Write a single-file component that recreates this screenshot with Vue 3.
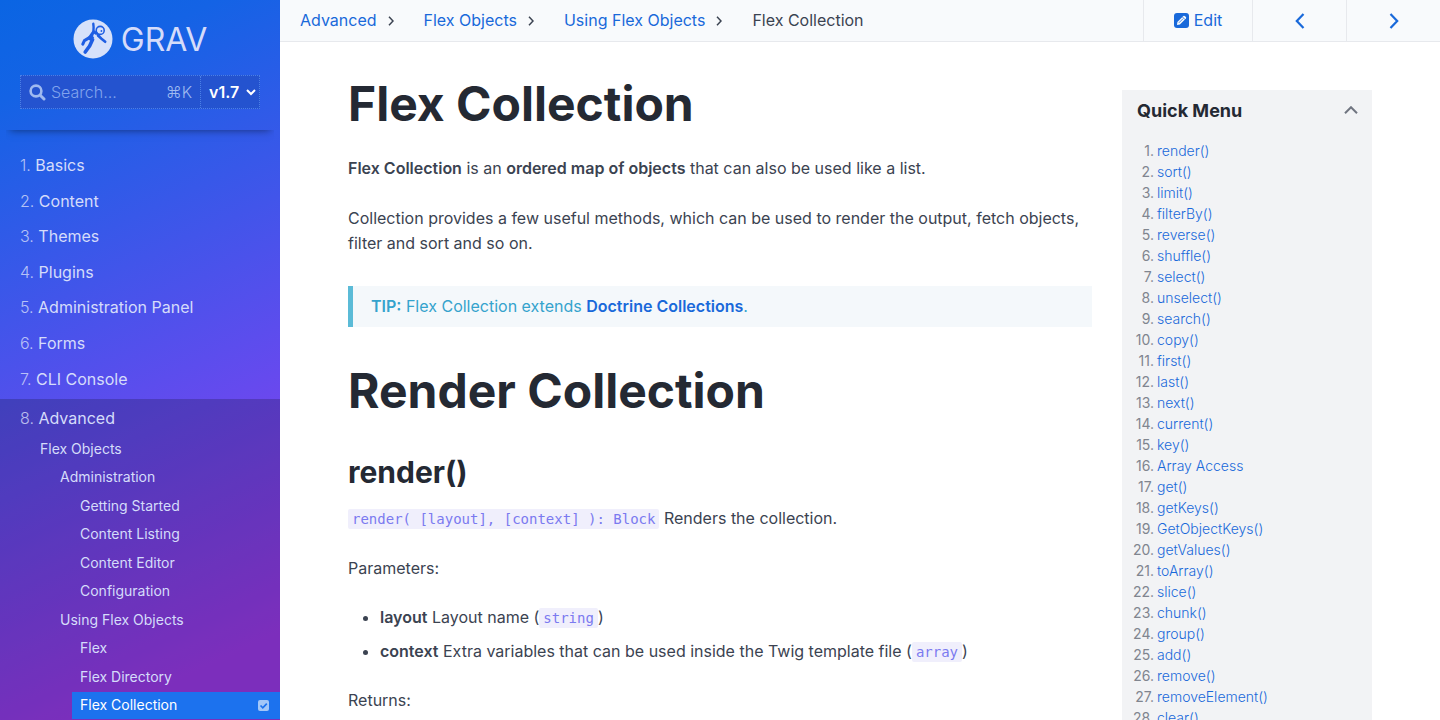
<script setup>
import { ref } from "vue";

const search = ref("");
const version = ref("v1.7");
const menuOpen = ref(true);

const chapters = [
  "Basics",
  "Content",
  "Themes",
  "Plugins",
  "Administration Panel",
  "Forms",
  "CLI Console",
];

// level = indentation in the tree
const pages = [
  { title: "Flex Objects", level: 1 },
  { title: "Administration", level: 2 },
  { title: "Getting Started", level: 3 },
  { title: "Content Listing", level: 3 },
  { title: "Content Editor", level: 3 },
  { title: "Configuration", level: 3 },
  { title: "Using Flex Objects", level: 2 },
  { title: "Flex", level: 3 },
  { title: "Flex Directory", level: 3 },
  { title: "Flex Collection", level: 3, active: true },
];

const crumbs = ["Advanced", "Flex Objects", "Using Flex Objects"];

const methods = [
  "render()", "sort()", "limit()", "filterBy()", "reverse()", "shuffle()",
  "select()", "unselect()", "search()", "copy()", "first()", "last()",
  "next()", "current()", "key()", "Array Access", "get()", "getKeys()",
  "GetObjectKeys()", "getValues()", "toArray()", "slice()", "chunk()",
  "group()", "add()", "remove()", "removeElement()", "clear()",
];
</script>

<template>
  <div class="page">
    <aside class="sidebar">
      <header class="side-head">
        <a class="logo" href="#">
          <svg width="40" height="40" viewBox="0 0 40 40" aria-hidden="true">
            <circle cx="20" cy="20" r="19.5" fill="#d6e1fa" />
            <g fill="none" stroke="#1f5ee3" stroke-linecap="round" stroke-linejoin="round">
              <path d="M20.3 4.8 L20.6 8 L20.4 13" stroke-width="2.4" />
              <path d="M21 14 L17.5 19" stroke-width="5" />
              <path d="M25 16.5 L28.5 19.8 L32.2 22.8" stroke-width="2.6" />
              <path d="M16.4 18.6 L11.4 21.6 L9.8 25.2" stroke-width="3" />
              <path d="M19.6 20.6 L16.6 27 L12.2 33" stroke-width="3.6" />
              <circle cx="27.2" cy="11.4" r="4" stroke-width="1.6" />
              <path d="M23.2 13.4 L25.6 16.4" stroke-width="2.4" />
            </g>
            <path d="M21 14.8 L23.4 16.2 L22.2 18.6 L20 17.4 Z" fill="#d6e1fa" />
            <circle cx="28.4" cy="12" r="0.9" fill="#1f5ee3" />
          </svg>
          <span>GRAV</span>
        </a>
        <form class="search" @submit.prevent>
          <label class="search-field" for="search">
            <svg width="17" height="17" viewBox="0 0 17 17" fill="none" stroke="currentColor" stroke-linecap="round" aria-hidden="true">
              <circle cx="7" cy="7" r="5.4" stroke-width="2.6" />
              <path d="M11.2 11.2 L15 15" stroke-width="3" />
            </svg>
            <input id="search" v-model="search" type="text" placeholder="Search..." />
            <kbd>⌘K</kbd>
          </label>
          <span class="version">
            <select v-model="version" aria-label="Version">
              <option>v1.7</option>
              <option>v1.6</option>
            </select>
            <svg width="10" height="7" viewBox="0 0 10 7" fill="none" stroke="currentColor" stroke-width="2" aria-hidden="true">
              <path d="M1 1 L5 5 L9 1" />
            </svg>
          </span>
        </form>
      </header>

      <ul class="chapters">
        <li v-for="(chapter, i) in chapters" :key="chapter">
          <a href="#"><b>{{ i + 1 }}.</b> {{ chapter }}</a>
        </li>
      </ul>
      <div class="current">
        <a class="current-title" href="#"><b>8.</b> Advanced</a>
        <ul class="tree">
          <li v-for="page in pages" :key="page.title" :class="['level-' + page.level, { active: page.active }]">
            <a href="#">{{ page.title }}</a>
            <svg v-if="page.active" width="11" height="11" viewBox="0 0 11 11" aria-hidden="true">
              <rect width="11" height="11" rx="2" fill="#a3c7f8" />
              <path d="M2.5 5.5 L4.8 7.8 L8.8 3.6" fill="none" stroke="#1c72ee" stroke-width="1.7" />
            </svg>
          </li>
        </ul>
      </div>
    </aside>

    <div class="body">
      <nav class="topbar">
        <ol class="crumbs">
          <li v-for="crumb in crumbs" :key="crumb">
            <a href="#">{{ crumb }}</a>
            <svg width="6" height="10" viewBox="0 0 6 10" fill="none" stroke="currentColor" stroke-width="1.5" aria-hidden="true">
              <path d="M1 0.8 L5 5 L1 9.2" />
            </svg>
          </li>
          <li>Flex Collection</li>
        </ol>
        <a class="tool edit" href="#">
          <svg width="15" height="15" viewBox="0 0 15 15" aria-hidden="true">
            <rect width="15" height="15" rx="3" fill="#1969da" />
            <path d="M3 12 L3.4 9 L9.4 3 Q10.2 2.4 11 3.2 L11.9 4.1 Q12.5 4.8 11.9 5.5 L5.9 11.6 Z" fill="#f8fafc" />
            <path d="M4.9 9.8 L9.1 5.6 M8.5 4 L11 6.5" stroke="#1969da" stroke-width="0.8" />
          </svg>
          Edit
        </a>
        <a class="tool" href="#" aria-label="Previous">
          <svg width="10" height="16" viewBox="0 0 10 16" fill="none" stroke="currentColor" stroke-width="2.2">
            <path d="M8.5 1 L1.8 8 L8.5 15" />
          </svg>
        </a>
        <a class="tool" href="#" aria-label="Next">
          <svg width="10" height="16" viewBox="0 0 10 16" fill="none" stroke="currentColor" stroke-width="2.2">
            <path d="M1.5 1 L8.2 8 L1.5 15" />
          </svg>
        </a>
      </nav>

      <div class="columns">
        <main class="article">
          <h1>Flex Collection</h1>
          <p><strong>Flex Collection</strong> is an <strong>ordered map of objects</strong> that can also be used like a list.</p>
          <p>Collection provides a few useful methods, which can be used to render the output, fetch objects, filter and sort and so on.</p>
          <div class="tip"><strong>TIP:</strong> Flex Collection extends <a href="#">Doctrine Collections</a>.</div>
          <h1>Render Collection</h1>
          <h2>render()</h2>
          <p><code>render( [layout], [context] ): Block</code> Renders the collection.</p>
          <p>Parameters:</p>
          <ul>
            <li><strong>layout</strong> Layout name (<code>string</code>)</li>
            <li><strong>context</strong> Extra variables that can be used inside the Twig template file (<code>array</code>)</li>
          </ul>
          <p>Returns:</p>
        </main>

        <aside class="quick">
          <button type="button" :aria-expanded="menuOpen" @click="menuOpen = !menuOpen">
            Quick Menu
            <svg width="14" height="8" viewBox="0 0 14 8" fill="none" stroke="#707580" stroke-width="2" aria-hidden="true">
              <path d="M1 7.2 L7 1.2 L13 7.2" />
            </svg>
          </button>
          <ol v-show="menuOpen">
            <li v-for="(method, i) in methods" :key="method">
              <span>{{ i + 1 }}.</span>
              <a href="#">{{ method }}</a>
            </li>
          </ol>
        </aside>
      </div>
    </div>
  </div>
</template>

<style>
body {
  margin: 0;
}
</style>

<style scoped>
.page {
  display: flex;
  height: 100vh;
  overflow: hidden;
  font-family: Inter, "Liberation Sans", sans-serif;
  font-size: 16px;
  font-weight: 400;
  line-height: 25px;
  color: #3b4351;
  background: #fff;
}

a {
  color: #1969da;
  text-decoration: none;
}

ul,
ol {
  margin: 0;
  padding: 0;
  list-style: none;
}

strong {
  font-weight: 600;
}

/* Sidebar */
.sidebar {
  flex: 0 0 280px;
  overflow: hidden;
  background: linear-gradient(155deg, #0a65e3 0%, #1463e5 12%, #654aee 59%, #9c3aeb 90%);
}

.sidebar a {
  color: #d5dcfa;
}

.side-head {
  height: 130px;
  padding: 19px 20px 0;
  box-sizing: border-box;
  box-shadow: 0 10px 8px -10px rgba(0, 0, 0, 0.5);
  clip-path: inset(0 6px -12px 6px);
}

.logo {
  display: flex;
  align-items: center;
  justify-content: center;
  gap: 8px;
  height: 40px;
  font-size: 32px;
}

.search {
  display: flex;
  height: 34px;
  margin-top: 16px;
  box-sizing: border-box;
  border: 1px dotted #4b80e6;
  background: #2453cf;
  color: #9fbaf0;
}

.search-field {
  display: flex;
  flex: 1;
  align-items: center;
  min-width: 0;
  padding: 0 8px;
  border-right: 1px dotted #4b80e6;
}

.search-field svg {
  flex: none;
}

.search input {
  flex: 1;
  min-width: 0;
  margin-left: 5px;
  padding: 0;
  border: 0;
  outline: 0;
  background: none;
  font: inherit;
  font-weight: 300;
  color: #fff;
}

.search input::placeholder {
  color: #81a4ed;
  opacity: 1;
}

kbd {
  font-family: inherit;
  font-weight: 300;
  color: #9fbaf0;
}

.version {
  display: flex;
  align-items: center;
  width: 58px;
  color: #fff;
}

.version select {
  flex: 1;
  min-width: 0;
  padding: 0 0 0 8px;
  border: 0;
  appearance: none;
  background: none;
  font: inherit;
  font-weight: 600;
  color: #fff;
}

.version svg {
  flex: none;
  margin-right: 3px;
}

.chapters {
  padding: 18px 20px 2px;
}

.chapters a,
.current-title {
  display: block;
  padding: 5px 0;
  line-height: 1.6;
}

.sidebar b {
  font-weight: 300;
  opacity: 0.8;
}

.current {
  height: 100%;
  padding: 2px 0 0 20px;
  background: rgba(0, 0, 0, 0.2);
}

.current-title {
  padding-bottom: 4px;
}

.tree {
  font-size: 14px;
  line-height: 1.75;
}

.tree li {
  display: flex;
  align-items: center;
  justify-content: space-between;
  margin-bottom: 2px;
  padding: 1px 11px 1px 8px;
}

.tree .level-1 {
  margin-left: 12px;
}

.tree .level-2 {
  margin-left: 32px;
}

.tree .level-3 {
  margin-left: 52px;
}

.tree .active {
  background: #1c72ee;
}

.tree .active a {
  color: #fff;
}

/* Top bar */
.body {
  flex: 1;
  min-width: 0;
}

.topbar {
  display: flex;
  height: 41px;
  border-bottom: 1px solid #e7e9ed;
  background: #f8fafc;
}

.crumbs {
  display: flex;
  flex: 1;
  align-items: center;
  gap: 30px;
  padding-left: 20px;
}

.crumbs li {
  display: flex;
  align-items: center;
  gap: 11px;
}

.tool {
  display: flex;
  align-items: center;
  justify-content: center;
  gap: 5px;
  width: 93px;
  border-left: 1px solid #e7e9ed;
}

.edit {
  width: 108px;
}

/* Content */
.columns {
  display: flex;
  gap: 30px;
  padding: 0 68px;
}

.article {
  flex: 1;
  min-width: 0;
}

h1,
h2 {
  font-weight: 700;
  color: #242933;
}

h1 {
  margin: 32px 0 22px;
  font-size: 48px;
  line-height: 60px;
}

h2 {
  margin: 31px 0 14px;
  font-size: 30px;
  line-height: 40px;
}

p {
  margin: 0 0 25px;
}

.tip {
  margin: 30px 0 34px;
  padding: 8px 18px;
  border-left: 5px solid #5bbbd7;
  background: #f4f8fb;
  color: #35a3cd;
}

.tip a {
  font-weight: 600;
}

code {
  padding: 2px 4px;
  border-radius: 2px;
  background: #f0effc;
  font-family: "DejaVu Sans Mono", monospace;
  font-size: 14px;
  line-height: 20px;
  color: #7b7af0;
}

.article ul {
  margin: -1px 0 24px;
  padding-left: 32px;
  list-style: disc;
}

.article li {
  margin-bottom: 9px;
}

/* Quick menu */
.quick {
  flex: 0 0 250px;
  align-self: flex-start;
  margin-top: 48px;
  background: #f2f3f5;
}

.quick button {
  display: flex;
  align-items: center;
  justify-content: space-between;
  width: 100%;
  height: 40px;
  padding: 0 14px 0 15px;
  border: 0;
  background: none;
  font: inherit;
  font-size: 18px;
  font-weight: 700;
  color: #242933;
}

.quick ol {
  padding: 10px 0;
  font-size: 14px;
  line-height: 21px;
}

.quick li {
  display: flex;
  gap: 3px;
}

.quick li span {
  width: 32px;
  text-align: right;
  color: #80858f;
}

.quick li a {
  font-weight: 300;
}
</style>
